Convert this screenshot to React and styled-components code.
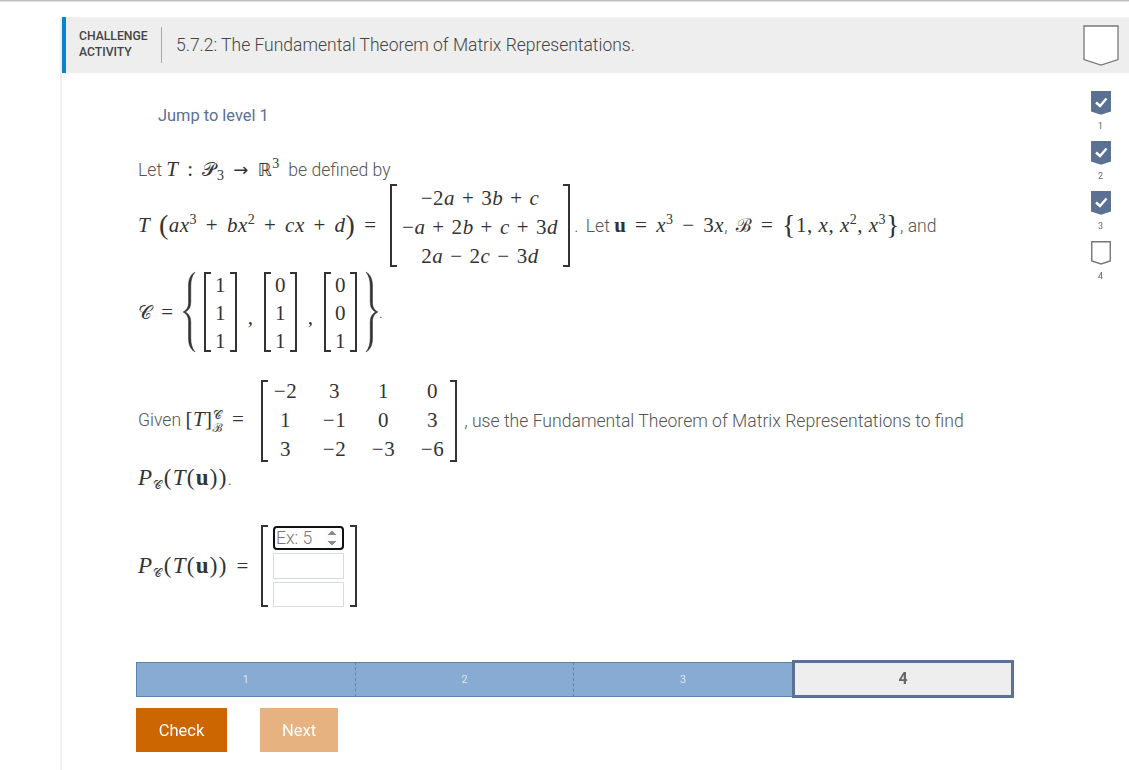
import React from "react";
import styled, { createGlobalStyle } from "styled-components";

const Global = createGlobalStyle`
	html, body { margin: 0; padding: 0; background: #fff; }
	body { font-family: Roboto, "Liberation Sans", sans-serif; font-weight: 300; color: #555; }
`;

const Check = () => (
	<path d="M5 11.500 L9 15 L15.500 7.500" fill="none" stroke="#fff" strokeWidth="2.4" />
);

const Badge = ({ done }) => (
	<svg width="20" height="24" viewBox="0 0 20 24">
		<path
			d="M0.75 0.75 H19.25 V20 L10 23 L0.75 20 Z"
			fill={done ? "#5a7193" : "#fff"}
			stroke={done ? "#5a7193" : "#777"}
			strokeWidth="1.4"
		/>
		{done && <Check />}
	</svg>
);

const Brace = ({ flip }) => (
	<BraceSvg width="14" height="82" viewBox="0 0 14 82" $flip={flip}>
		<path
			d="M13 1 C8 4 6.500 9 6.500 15 V31 C6.500 36 5 39 1 41 C5 43 6.500 46 6.500 51 V67 C6.500 73 8 78 13 81 C10 77 8.800 73 8.800 67 V51 C8.800 46 7 43 3.500 41 C7 39 8.800 36 8.800 31 V15 C8.800 9 10 5 13 1 Z"
			fill="#333"
			stroke="#333"
			strokeWidth="0.5"
		/>
	</BraceSvg>
);

const Matrix = ({ rows, cols, cellW, pitch, pad, height, lift = 1 }) => (
	<MatrixBox $height={height}>
		<Bracket $side="left" />
		<MatrixGrid $cols={cols} $cellW={cellW} $pitch={pitch} $pad={pad} $lift={lift}>
			{rows.flat().map((v, i) => (
				<Cell key={i}>{v}</Cell>
			))}
		</MatrixGrid>
		<Bracket $side="right" />
	</MatrixBox>
);

const PC = () => (
	<PCWrap>
		<I>P</I>
		<Sub>
			<Script>𝒞</Script>
		</Sub>
		(<I>T</I>(<B>u</B>))
	</PCWrap>
);

const App = () => {
	const plus = " + ";
	return (
		<Page>
			<Global />
			<TopRule />
			<Card>
				<Header>
					<Tag>
						CHALLENGE
						<br />
						ACTIVITY
					</Tag>
					<Title>5.7.2: The Fundamental Theorem of Matrix Representations.</Title>
					<HeaderBadge>
						<svg width="36" height="41" viewBox="0 0 36 41">
							<path
								d="M1 1 H35 V34.500 L18 40 L1 34.500 Z"
								fill="#fff"
								stroke="#777"
								strokeWidth="1.3"
							/>
						</svg>
					</HeaderBadge>
				</Header>
				<Body>
					<Content>
						<JumpLink>Jump to level 1</JumpLink>
						<FirstLine>
							Let{" "}
							<M>
								<I>T</I> : <Script>𝒫</Script>
								<Sub>3</Sub> <Arrow>→</Arrow> <Arrow>ℝ</Arrow>
								<Sup>3</Sup>
							</M>
							{"  "}be defined by
						</FirstLine>
						<MathRow>
							<Lead $w={252}>
								<I>T</I> <Paren>(</Paren>
								<I>ax</I>
								<Sup>3</Sup>
								{plus}
								<I>bx</I>
								<Sup>2</Sup>
								{plus}
								<I>cx</I>
								{plus}
								<I>d</I>
								<Paren>)</Paren> =
							</Lead>
							<Matrix
								cols={1}
								cellW={166}
								pitch={29}
								pad={0}
								height={83}
								lift={0}
								rows={[
									[<>−2<I>a</I> + 3<I>b</I> + <I>c</I></>],
									[<>−<I>a</I> + 2<I>b</I> + <I>c</I> + 3<I>d</I></>],
									[<>2<I>a</I> − 2<I>c</I> − 3<I>d</I></>],
								]}
							/>
							<Trail>
								{" . "}
								<LetWord>Let </LetWord>
								<M>
									<B>u</B> = <I>x</I>
									<Sup>3</Sup> − 3<I>x</I>
								</M>
								<SetComma>, </SetComma>
								<M>
									<Script>ℬ</Script> ={" "}
								</M>
								<SetList>
									<Paren>{"{"}</Paren>1, <I>x</I>, <I>x</I>
									<Sup>2</Sup>, <I>x</I>
									<Sup>3</Sup>
									<Paren>{"}"}</Paren>
								</SetList>
								, and
							</Trail>
						</MathRow>
						<SetRow>
							<Lead $w={44}>
								<Script>𝒞</Script> =
							</Lead>
							<Brace />
							<BraceGap />
							<Matrix cols={1} cellW={19} pitch={28} pad={0} height={80} rows={[[1], [1], [1]]} />
							<Comma>,</Comma>
							<Matrix cols={1} cellW={19} pitch={28} pad={0} height={80} rows={[[0], [1], [1]]} />
							<Comma>,</Comma>
							<Matrix cols={1} cellW={19} pitch={28} pad={0} height={80} rows={[[0], [0], [1]]} />
							<BraceGap />
							<Brace flip />
							<span> .</span>
						</SetRow>
						<GivenRow>
							<GivenLead>
								Given{" "}
								<M>
									[<I>T</I>]
									<SupSub>
										<Script>𝒞</Script>
										<Script>ℬ</Script>
									</SupSub>
									{" ="}
								</M>
							</GivenLead>
							<Matrix
								cols={4}
								cellW={49}
								pitch={29}
								pad={-7}
								height={82}
								lift={3}
								rows={[
									["−2", 3, 1, 0],
									[1, "−1", 0, 3],
									[3, "−2", "−3", "−6"],
								]}
							/>
							<GivenTrail>{" , use the Fundamental Theorem of Matrix Representations to find"}</GivenTrail>
						</GivenRow>
						<PLine>
							<M>
								<PC />
							</M>
							.
						</PLine>
						<AnswerRow>
							<Lead $w={123}>
								<PC /> =
							</Lead>
							<MatrixBox $height={82}>
								<Bracket $side="left" />
								<AnswerCells>
									<AnswerInput type="number" placeholder="Ex: 5" autoFocus />
									<EmptyInput />
									<EmptyInput />
								</AnswerCells>
								<Bracket $side="right" />
							</MatrixBox>
						</AnswerRow>
						<Progress>
							<Level>1</Level>
							<Level>2</Level>
							<Level>3</Level>
							<CurrentLevel>4</CurrentLevel>
						</Progress>
						<Buttons>
							<CheckButton>Check</CheckButton>
							<NextButton>Next</NextButton>
						</Buttons>
					</Content>
					<Rail>
						{[1, 2, 3, 4].map((n) => (
							<RailItem key={n}>
								<Badge done={n < 4} />
								<RailLabel>{n}</RailLabel>
							</RailItem>
						))}
					</Rail>
				</Body>
			</Card>
		</Page>
	);
};

export default App;

const Page = styled.div`
	width: 1129px;
	height: 770px;
	overflow: hidden;
`;

const TopRule = styled.div`
	height: 1px;
	background: #bbb;
	box-shadow: 0 1px 1px #ddd;
`;

const Card = styled.section`
	margin: 16px 0 0 60px;
	border-left: 2px solid #f0f0f0;
	height: 753px;
`;

const Header = styled.header`
	display: flex;
	align-items: center;
	height: 56px;
	background: #eee;
	border-left: 4px solid #0b84d0;
`;

const Tag = styled.div`
	width: 82px;
	margin-left: 13px;
	padding-bottom: 2px;
	font-size: 12.200px;
	font-weight: 500;
	line-height: 16px;
	color: #444;
`;

const Title = styled.h1`
	flex: 1;
	margin: 0;
	padding-left: 14px;
	height: 36px;
	line-height: 36px;
	border-left: 1px solid #aaa;
	font-size: 17.500px;
	font-weight: 300;
	color: #444;
`;

const HeaderBadge = styled.div`
	display: flex;
	margin-right: 10px;
`;

const Body = styled.div`
	display: flex;
`;

const Content = styled.div`
	width: 934px;
	padding-left: 76px;
	flex: none;
`;

const Rail = styled.aside`
	display: flex;
	flex-direction: column;
	align-items: center;
	width: 57px;
	padding-top: 18px;
	flex: none;
`;

const RailItem = styled.div`
	display: flex;
	flex-direction: column;
	align-items: center;
	height: 50px;
`;

const RailLabel = styled.span`
	font-size: 9px;
	line-height: 11px;
	margin-top: 6px;
	font-weight: 400;
	color: #666;
`;

const JumpLink = styled.a`
	display: block;
	margin: 33px 0 0 20px;
	font-size: 16.400px;
	line-height: 20px;
	font-weight: 400;
	color: #5a7193;
`;

const FirstLine = styled.p`
	margin: 31px 0 0;
	height: 25px;
	line-height: 25px;
	font-size: 17.600px;
	white-space: pre;
`;

const M = styled.span`
	font-family: "Liberation Serif", "DejaVu Serif", serif;
	font-weight: 400;
	font-size: 21px;
	letter-spacing: 0.5px;
	word-spacing: 3px;
	color: #333;
	white-space: pre;
`;

const SetList = styled(M)`
	word-spacing: 0;
`;

const LetWord = styled.span`
	margin-left: 3px;
`;

const SetComma = styled.span`
	margin-right: 4px;
`;

const PCWrap = styled.span`
	font-size: 23px;
	letter-spacing: 1.300px;
`;

const Lead = styled(M)`
	flex: none;
	width: ${(p) => p.$w}px;
`;

const I = styled.i`
	font-style: italic;
`;

const B = styled.b`
	font-weight: 700;
`;

const Script = styled.span`
	font-family: "DejaVu Serif", "Noto Sans", serif;
	font-size: 19px;
`;

const Arrow = styled.span`
	font-family: "DejaVu Sans", sans-serif;
	font-size: 18px;
`;

const Sup = styled.sup`
	font-size: 14px;
	line-height: 0;
	vertical-align: 8px;
`;

const Sub = styled.sub`
	font-size: 14px;
	line-height: 0;
	vertical-align: -4px;

	span {
		font-size: 12px;
	}
`;

const SupSub = styled.span`
	display: inline-flex;
	flex-direction: column;
	vertical-align: middle;
	line-height: 13px;
	font-size: 13px;

	span {
		font-size: 12px;
	}
`;

const Paren = styled.span`
	font-size: 28px;
	font-weight: 300;
	line-height: 0;
	vertical-align: -2px;
`;

const MathRow = styled.div`
	display: flex;
	align-items: center;
	white-space: nowrap;
	height: 86px;
`;

const SetRow = styled(MathRow)`
	margin-top: 1px;
`;

const GivenRow = styled(MathRow)`
	margin-top: 23px;
	font-size: 17.600px;
	white-space: pre;
`;

const GivenLead = styled.span`
	flex: none;
	width: 123px;
	white-space: pre;
`;

const Trail = styled.span`
	font-size: 17.600px;
	white-space: pre;
`;

const GivenTrail = styled(Trail)`
	margin-left: 3px;
`;

const PLine = styled.p`
	margin: 0;
	height: 28px;
	line-height: 28px;
	white-space: nowrap;
	font-size: 17.600px;
`;

const Comma = styled(M)`
	flex: none;
	width: 27px;
	padding-top: 10px;
	text-align: center;
`;

const BraceSvg = styled.svg`
	flex: none;
	transform: ${(p) => (p.$flip ? "scaleX(-1)" : "none")};
`;

const BraceGap = styled.span`
	flex: none;
	width: 8px;
`;

const MatrixBox = styled.span`
	display: inline-flex;
	align-items: stretch;
	height: ${(p) => p.$height}px;
	flex: none;
`;

const Bracket = styled.span`
	box-sizing: border-box;
	width: 7px;
	flex: none;
	border: 2px solid #333;
	border-${(p) => (p.$side === "left" ? "right" : "left")}: none;
`;

const MatrixGrid = styled.span`
	display: grid;
	grid-template-columns: repeat(${(p) => p.$cols}, ${(p) => p.$cellW}px);
	grid-auto-rows: ${(p) => p.$pitch}px;
	align-items: center;
	justify-items: center;
	margin: ${(p) => -p.$lift}px ${(p) => p.$pad}px 0;
`;

const Cell = styled(M)`
	line-height: 29px;
	word-spacing: 1.200px;
`;

const AnswerRow = styled(MathRow)`
	margin-top: 32px;
	height: 84px;
`;

const AnswerCells = styled.span`
	display: flex;
	flex-direction: column;
	gap: 3px;
	padding: 1px 6px 0 5px;
`;

const AnswerInput = styled.input`
	box-sizing: border-box;
	width: 71px;
	height: 25px;
	padding: 0 2px 0 1px;
	border: 2px solid #111;
	border-radius: 4px;
	outline: none;
	font-family: Roboto, sans-serif;
	font-size: 17.600px;
	font-weight: 300;

	&::placeholder {
		color: #777;
	}

	&::-webkit-inner-spin-button {
		opacity: 1;
	}
`;

const EmptyInput = styled.span`
	box-sizing: border-box;
	display: block;
	width: 71px;
	height: 26px;
	border: 1px solid #d3dcdf;
`;

const Progress = styled.div`
	display: flex;
	align-items: center;
	width: 878px;
	height: 38px;
	margin: 52px 0 0 -2px;
`;

const Level = styled.div`
	box-sizing: border-box;
	flex: 1;
	height: 35px;
	line-height: 33px;
	text-align: center;
	font-size: 11px;
	font-weight: 400;
	color: #dde7f1;
	background: #87abd2;
	border: 1px solid #5b84ab;
	border-left: none;
	border-right: 1px dashed #5b84ab;

	&:first-child {
		border-left: 1px solid #5b84ab;
	}

	&:nth-child(3) {
		border-right: none;
	}
`;

const CurrentLevel = styled.div`
	box-sizing: border-box;
	flex: none;
	width: 222px;
	height: 38px;
	line-height: 32px;
	text-align: center;
	font-size: 16px;
	font-weight: 700;
	color: #666;
	background: #eee;
	border: 3px solid #5a7193;
`;

const Buttons = styled.div`
	display: flex;
	gap: 33px;
	margin: 10px 0 0 -2px;
`;

const CheckButton = styled.button`
	width: 91px;
	height: 44px;
	padding: 0;
	border: none;
	background: #cc6600;
	color: #fff;
	font-family: Roboto, sans-serif;
	font-size: 16.500px;
	font-weight: 400;
`;

const NextButton = styled(CheckButton)`
	width: 78px;
	background: #e6b27f;
`;
